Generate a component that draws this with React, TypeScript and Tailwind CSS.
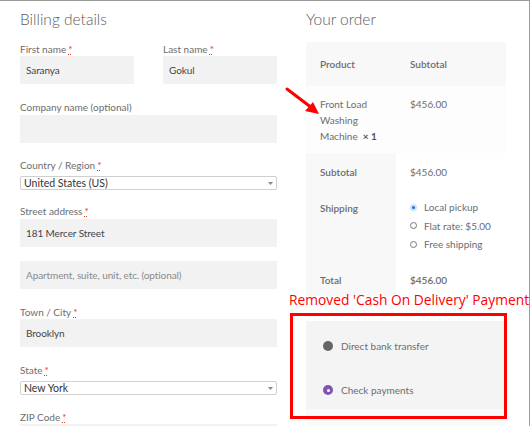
import React from "react";

const font = { fontFamily: "Lato, 'Noto Sans', sans-serif" };

function Req() {
  return (
    <abbr className="ml-[2px] text-[#e2401c] no-underline [text-decoration:underline_dotted] decoration-[#e2401c]">
      *
    </abbr>
  );
}

function Label({ text, req, className }: { text: string; req?: boolean; className?: string }) {
  return (
    <div className={"h-[14px] text-[10px] leading-[14px] text-[#6d6d6d] " + (className ?? "")}>
      {text}
      {req && <Req />}
    </div>
  );
}

function Input({ value, placeholder, className }: { value?: string; placeholder?: string; className?: string }) {
  return (
    <div
      className={
        "flex h-[28px] items-center bg-[#f2f2f2] px-[6px] text-[10px] tracking-[-0.1px] " +
        (value ? "text-[#43454b] " : "text-[#8a8a8a] ") +
        (className ?? "")
      }
    >
      {value ?? placeholder}
    </div>
  );
}

function Select({ value, className }: { value: string; className?: string }) {
  return (
    <div
      className={
        "flex h-[14px] items-center justify-between rounded-[2px] border border-[#cfcfcf] bg-white pl-[3px] pr-[3px] text-[10.5px] leading-none text-[#333] " +
        (className ?? "")
      }
    >
      <span>{value}</span>
      <svg width="5" height="3" viewBox="0 0 5 3">
        <path d="M0 0h5L2.5 3z" fill="#888" />
      </svg>
    </div>
  );
}

function Radio({ checked }: { checked?: boolean }) {
  return checked ? (
    <span className="inline-block h-[7px] w-[7px] rounded-full border-[2px] border-[#cde0ff] bg-[#1a73e8]" />
  ) : (
    <span className="inline-block h-[7px] w-[7px] rounded-full border border-[#777] bg-white" />
  );
}

export default function App() {
  return (
    <div
      className="relative h-[426px] w-[530px] overflow-hidden border-t border-r border-[#9a9a9a] bg-white"
      style={font}
    >
      <div className="flex">
        {/* Billing details */}
        <div className="ml-[20px] w-[257px]">
          <h3 className="mt-[6px] h-[24px] text-[15.5px] font-light leading-[24px] text-[#5a5a5a]">Billing details</h3>

          <div className="mt-[11px] flex justify-between">
            <div className="w-[114px]">
              <Label text="First name" req />
              <Input value="Saranya" />
            </div>
            <div className="w-[114px]">
              <Label text="Last name" req />
              <Input value="Gokul" />
            </div>
          </div>

          <Label text="Company name (optional)" className="mt-[16px]" />
          <Input className="mt-[1px]" />

          <Label text="Country / Region" req className="mt-[15px]" />
          <Select value="United States (US)" className="mt-[4px]" />

          <Label text="Street address" req className="mt-[14px]" />
          <Input value="181 Mercer Street" className="mt-[1px]" />
          <Input placeholder="Apartment, suite, unit, etc. (optional)" className="mt-[14px]" />

          <Label text="Town / City" req className="mt-[16px]" />
          <Input value="Brooklyn" />

          <Label text="State" req className="mt-[16px]" />
          <Select value="New York" className="mt-[4px]" />

          <Label text="ZIP Code" req className="mt-[15px]" />
          <Input className="mt-[0px]" />
        </div>

        {/* Your order */}
        <div className="ml-[29px] w-[200px]">
          <h3 className="mt-[6px] h-[24px] text-[15.5px] font-light leading-[24px] text-[#5a5a5a]">Your order</h3>

          <div className="mt-[11px] text-[10px] leading-[16px] text-[#6d6d6d]">
            <div className="flex h-[44px] items-center bg-[#f8f8f8] font-semibold">
              <div className="w-[90px] pl-[14px]">Product</div>
              <div className="pl-[14px]">Subtotal</div>
            </div>
            <div className="flex h-[67px] bg-[#fdfdfd] pt-[10px]">
              <div className="w-[90px] pl-[14px]">
                <div>Front Load</div>
                <div>Washing</div>
                <div>
                  Machine <strong className="font-bold text-[#555]">&nbsp;× 1</strong>
                </div>
              </div>
              <div className="pl-[14px]">$456.00</div>
            </div>

            <div className="flex h-[38px]">
              <div className="w-[90px] bg-[#f8f8f8] pl-[14px] pt-[11px] font-semibold">Subtotal</div>
              <div className="pl-[14px] pt-[11px]">$456.00</div>
            </div>
            <div className="flex h-[71px]">
              <div className="w-[90px] bg-[#f8f8f8] pl-[14px] pt-[9px] font-semibold">Shipping</div>
              <div className="pl-[14px] pt-[7px]">
                {[
                  ["Local pickup", true],
                  ["Flat rate: $5.00", false],
                  ["Free shipping", false],
                ].map(([t, c]) => (
                  <div key={t as string} className="flex h-[18.5px] items-center gap-[7px]">
                    <Radio checked={c as boolean} />
                    <span>{t as string}</span>
                  </div>
                ))}
              </div>
            </div>
            <div className="flex h-[34px]">
              <div className="w-[90px] bg-[#f8f8f8] pl-[14px] pt-[10px] font-semibold">Total</div>
              <div className="pl-[14px] pt-[10px] font-semibold">$456.00</div>
            </div>
          </div>

          {/* Payment methods */}
          <div className="mt-[25px] w-[198px] bg-[#f4f4f4] pb-[12px] pt-[18px] text-[10px] text-[#6d6d6d]">
            <div className="flex h-[14px] items-center pl-[17px]">
              <span className="h-[10px] w-[10px] rounded-full bg-[#666]" />
              <span className="ml-[8px]">Direct bank transfer</span>
            </div>
            <div className="mt-[30px] flex h-[14px] items-center pl-[17px]">
              <span className="flex h-[10px] w-[10px] items-center justify-center rounded-full bg-[#7f54b3]">
                <span className="h-[3px] w-[3px] rounded-full bg-white" />
              </span>
              <span className="ml-[8px]">Check payments</span>
            </div>
          </div>
          <div className="h-[20px] w-[200px] bg-[#fafafa]" />
        </div>
      </div>

      {/* annotation overlay */}
      <svg className="absolute left-[284px] top-[84px]" width="40" height="34" viewBox="0 0 40 34">
        <line x1="3" y1="4" x2="28" y2="23" stroke="#f00" strokeWidth="3" strokeLinecap="round" />
        <path d="M35 29L21 26L29 17Z" fill="#f00" />
      </svg>
      <div
        className="absolute left-[289px] top-[290px] whitespace-nowrap text-[13.8px] leading-[18px] text-[#f00]"
        style={{ fontFamily: "'Open Sans', sans-serif" }}
      >
        Removed 'Cash On Delivery' Payment
      </div>
      <div className="absolute left-[290px] top-[312px] h-[106px] w-[217px] border-[3px] border-[#f00]" />
    </div>
  );
}
